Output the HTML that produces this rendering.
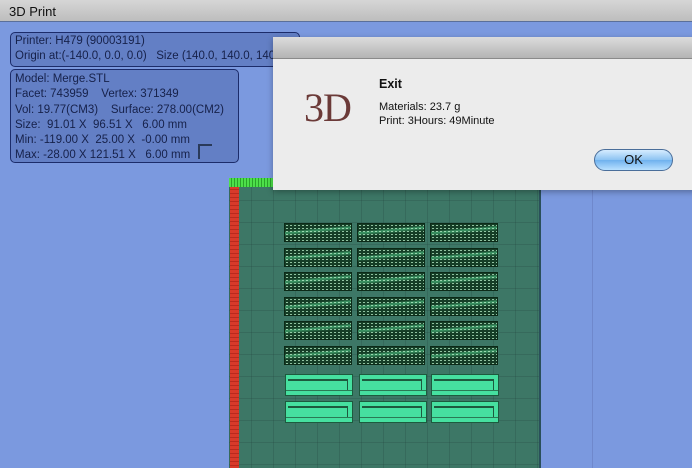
<!DOCTYPE html>
<html><head><meta charset="utf-8"><style>
*{margin:0;padding:0;box-sizing:border-box}
body{width:692px;height:468px;overflow:hidden;position:relative;background:#7b99df;font-family:"Liberation Sans",sans-serif}
.abs{position:absolute}
.top{left:0;top:0;width:692px;height:22px;background:linear-gradient(#d6d6d6,#bdbdbd);border-bottom:1px solid #5a6f9a;font-size:13px;color:#111;padding:4px 0 0 9px}
.box{border:1px solid #1c2c6a;border-radius:5px;background:rgba(80,105,175,.55);color:#16214a;font-size:11.5px;line-height:15.3px;padding:1px 0 0 4px;white-space:nowrap;overflow:hidden}
.plate{left:229px;top:178px;width:312px;height:290px;background-color:#3d7766;
background-image:linear-gradient(90deg,rgba(30,60,55,.22) 1px,transparent 1px),linear-gradient(rgba(30,60,55,.22) 1px,transparent 1px);background-size:22px 22px;border-right:2px solid #2a4f5a}
.red{left:230px;top:186px;width:9px;height:282px;background:repeating-linear-gradient(#d83a2a 0 3px,#b82a1e 3px 4px)}
.grn{left:229px;top:178px;width:46px;height:9px;background:repeating-linear-gradient(90deg,#4de04a 0 2px,#2aa32a 2px 3px)}
.d{position:absolute;width:68px;height:19px;background:#153d26;border:1px solid #0c2a18;
background-image:radial-gradient(#bff5cf 0.6px,transparent 1px),linear-gradient(175deg,transparent 30%,rgba(90,220,150,.6) 40%,transparent 55%);background-size:4px 3px,100% 100%}
.l{position:absolute;width:68px;height:22px;background:#46e0a0;border:1px solid #1d5a3e}
.l::before{content:"";position:absolute;left:2px;right:4px;top:4px;height:10px;border-top:2px solid #1d5a3e;border-right:1px solid #1d5a3e}
.l::after{content:"";position:absolute;left:0;right:0;top:15px;border-top:1px solid #2a7a55}
.dlg{left:273px;top:37px;width:430px;height:153px;background:#ececec;box-shadow:0 2px 6px rgba(0,0,0,.3)}
.tb{left:0;top:0;width:100%;height:22px;background:linear-gradient(#dcdcdc,#b4b4b4);border-bottom:1px solid #8a8a8a}
</style></head><body>
<div class="abs top">3D Print</div>
<div class="abs plate"></div>
<div class="abs red"></div>
<div class="abs grn"></div>
<div class="abs" style="left:592px;top:190px;width:1px;height:278px;background:#6f88cc"></div>

<div class="d" style="left:284px;top:223px"></div><div class="d" style="left:357px;top:223px"></div><div class="d" style="left:430px;top:223px"></div>
<div class="d" style="left:284px;top:248px"></div><div class="d" style="left:357px;top:248px"></div><div class="d" style="left:430px;top:248px"></div>
<div class="d" style="left:284px;top:272px"></div><div class="d" style="left:357px;top:272px"></div><div class="d" style="left:430px;top:272px"></div>
<div class="d" style="left:284px;top:297px"></div><div class="d" style="left:357px;top:297px"></div><div class="d" style="left:430px;top:297px"></div>
<div class="d" style="left:284px;top:321px"></div><div class="d" style="left:357px;top:321px"></div><div class="d" style="left:430px;top:321px"></div>
<div class="d" style="left:284px;top:346px"></div><div class="d" style="left:357px;top:346px"></div><div class="d" style="left:430px;top:346px"></div>
<div class="l" style="left:285px;top:374px"></div><div class="l" style="left:359px;top:374px"></div><div class="l" style="left:431px;top:374px"></div>
<div class="l" style="left:285px;top:401px"></div><div class="l" style="left:359px;top:401px"></div><div class="l" style="left:431px;top:401px"></div>

<div class="abs box" style="left:10px;top:32px;width:290px;height:35px">Printer: H479 (90003191)<br>Origin at:(-140.0, 0.0, 0.0)&nbsp;&nbsp; Size (140.0, 140.0, 140.0)</div>
<div class="abs box" style="left:10px;top:69px;width:229px;height:94px;padding-top:2px">Model: Merge.STL<br>Facet: 743959&nbsp;&nbsp;&nbsp; Vertex: 371349<br>Vol: 19.77(CM3)&nbsp;&nbsp;&nbsp; Surface: 278.00(CM2)<br>Size:&nbsp; 91.01 X&nbsp; 96.51 X&nbsp;&nbsp; 6.00 mm<br>Min: -119.00 X&nbsp; 25.00 X&nbsp; -0.00 mm<br>Max: -28.00 X 121.51 X&nbsp;&nbsp; 6.00 mm</div>
<div class="abs" style="left:198px;top:144px;width:14px;height:15px;border-left:2px solid #2a3a5a;border-top:2px solid #2a3a5a"></div>

<div class="abs dlg">
<div class="abs tb"></div>
<div class="abs" style="left:31px;top:47px;font-family:'Liberation Serif',serif;font-size:40px;color:#6b3a38;letter-spacing:-1px">3D</div>
<div class="abs" style="left:106px;top:40px;font-size:12.5px;font-weight:bold;color:#111">Exit</div>
<div class="abs" style="left:106px;top:63px;font-size:11px;line-height:14px;color:#111">Materials: 23.7 g<br>Print: 3Hours: 49Minute</div>
<div class="abs" style="left:321px;top:112px;width:79px;height:22px;border-radius:11px;border:1px solid #4a6e9a;background:linear-gradient(#d6ecff,#8cc3f2 50%,#6fb1ee 51%,#b8e0ff);font-size:13px;text-align:center;line-height:20px;color:#111">OK</div>
</div>
</body></html>
